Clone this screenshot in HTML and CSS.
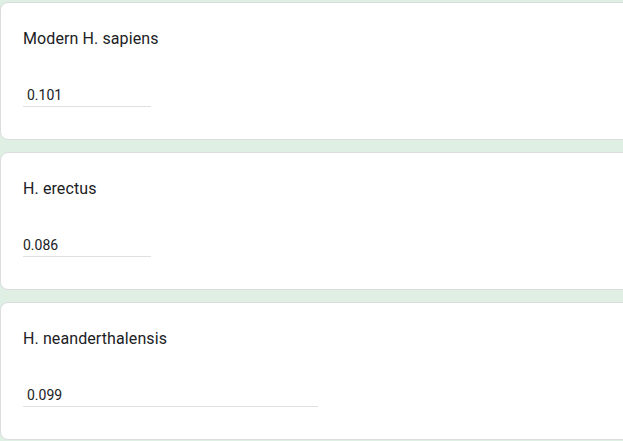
FILE: index.html
```html
<!DOCTYPE html>
<html lang="en">
<head>
<meta charset="utf-8">
<title>Form</title>
<link rel="stylesheet" href="styles.css">
</head>
<body>
<div class="list">
  <div class="card">
    <div class="title">Modern H. sapiens</div>
    <div class="answer answer--short answer--indent">0.101</div>
  </div>
  <div class="card">
    <div class="title">H. erectus</div>
    <div class="answer answer--short">0.086</div>
  </div>
  <div class="card">
    <div class="title">H. neanderthalensis</div>
    <div class="answer answer--long answer--indent">0.099</div>
  </div>
</div>
</body>
</html>
```
FILE: styles.css
```css
html, body {
  margin: 0;
  padding: 0;
  background: #e0efe3;
  overflow: hidden;
}
body {
  font-family: Roboto, "Liberation Sans", Arial, sans-serif;
  color: #202124;
}
.list {
  width: 660px;
  padding-top: 2px;
  display: flex;
  flex-direction: column;
  gap: 12px;
}
.card {
  background: #ffffff;
  border: 1px solid #dadce0;
  border-radius: 8px;
  height: 138px;
  box-sizing: border-box;
  padding: 24px 23px 0 22px;
}
.title {
  font-size: 16px;
  line-height: 24px;
  letter-spacing: 0.1px;
}
.answer {
  margin-top: 34px;
  font-size: 14px;
  line-height: 20px;
  padding-bottom: 1px;
  border-bottom: 1px solid #e0e0e0;
  box-sizing: content-box;
}
.answer--short { width: 128px; }
.answer--long { width: 295px; }
.answer--indent { padding-left: 4px; }
.answer--indent.answer--short { width: 124px; }
.answer--indent.answer--long { width: 291px; }
```
